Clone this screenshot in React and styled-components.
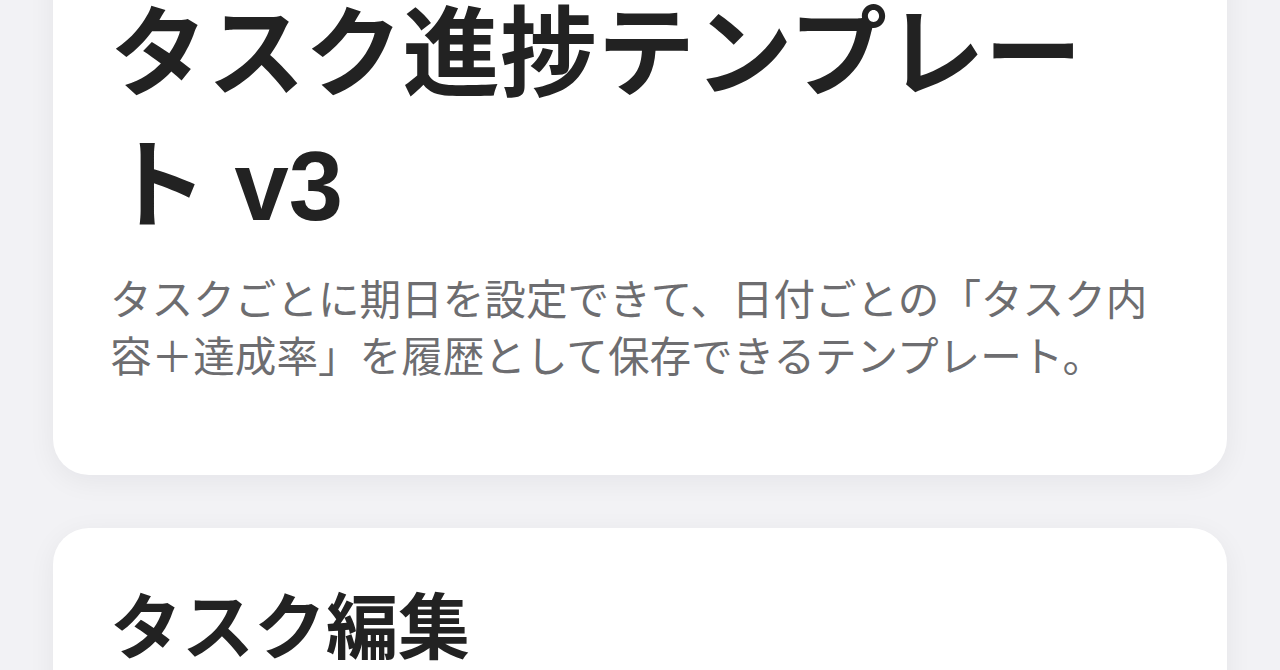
import React, { useLayoutEffect } from "react";
import styled, { createGlobalStyle } from "styled-components";

const GlobalStyle = createGlobalStyle`
  html, body {
    margin: 0;
    padding: 0;
    background: #f2f2f5;
    font-family: "Liberation Sans", "Noto Sans CJK JP", sans-serif;
    -webkit-font-smoothing: antialiased;
  }
  * { box-sizing: border-box; }
`;

const Page = styled.main`
  display: flex;
  flex-direction: column;
  gap: 53px;
  padding: 53px 53px 80px;
`;

const Card = styled.section`
  background: #ffffff;
  border-radius: 36px;
  box-shadow: 0 6px 28px rgba(20, 20, 40, 0.06);
  padding: ${(p) => p.$pad};
`;

const Title = styled.h1`
  margin: 0 0 19px;
  font-size: 97.5px;
  line-height: 132px;
  font-weight: 700;
  color: #222222;
`;

const Lead = styled.p`
  margin: 0;
  font-size: 41.6px;
  line-height: 57px;
  font-weight: 400;
  color: #6d6d70;
`;

const SectionTitle = styled.h2`
  margin: 0 0 30px;
  font-size: 72px;
  line-height: 94px;
  font-weight: 700;
  color: #222222;
`;

const Field = styled.label`
  display: flex;
  flex-direction: column;
  gap: 12px;
  margin-bottom: 28px;
  font-size: 36px;
  color: #6d6d70;
`;

const Input = styled.input`
  height: 96px;
  border: 2px solid #e2e2e6;
  border-radius: 20px;
  padding: 0 28px;
  font-size: 38px;
  font-family: inherit;
  color: #222;
  background: #fafafc;
`;

const Button = styled.button`
  height: 104px;
  width: 100%;
  border: none;
  border-radius: 24px;
  background: #007aff;
  color: #fff;
  font-size: 40px;
  font-weight: 700;
  font-family: inherit;
`;

export default function App() {
  useLayoutEffect(() => {
    window.scrollTo(0, 128);
  }, []);

  return (
    <>
      <GlobalStyle />
      <Page>
        <Card $pad="64px 57px 89px">
          <Title>タスク進捗テンプレート v3</Title>
          <Lead>
            タスクごとに期日を設定できて、日付ごとの「タスク内容＋達成率」を履歴として保存できるテンプレート。
          </Lead>
        </Card>
        <Card $pad="53px 57px 57px">
          <SectionTitle>タスク編集</SectionTitle>
          <Field>
            タスク名
            <Input defaultValue="" placeholder="タスクを入力" />
          </Field>
          <Field>
            期日
            <Input type="date" />
          </Field>
          <Button type="button">タスクを追加</Button>
        </Card>
      </Page>
    </>
  );
}
